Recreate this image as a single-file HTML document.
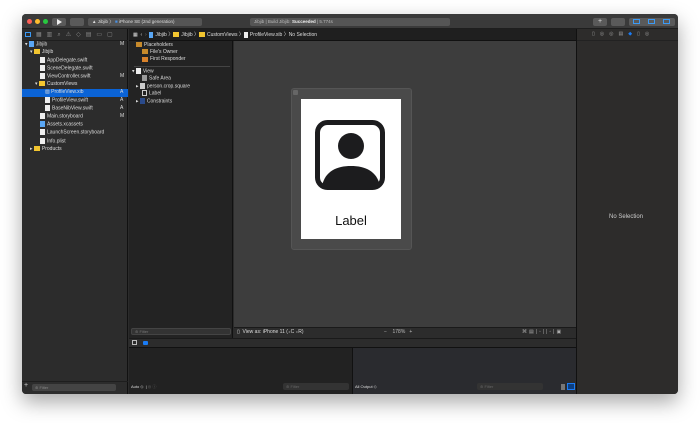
<!DOCTYPE html>
<html><head><style>
*{margin:0;padding:0;box-sizing:border-box}
body{width:700px;height:423px;background:#fff;position:relative;overflow:hidden;font-family:"Liberation Sans",sans-serif;font-size:5px;color:#ddd}
.a{position:absolute}
.win{left:22px;top:14px;width:656px;height:380px;background:#2b2b2b;border-radius:4px;box-shadow:0 8px 20px rgba(0,0,0,.35);overflow:hidden}
.t{white-space:nowrap;font-size:5px;color:#ddd}
.ic{display:inline-block;width:5px;height:6px;background:#eee;vertical-align:middle;margin-right:2px}
.fd{display:inline-block;width:6px;height:5px;background:#f2c530;vertical-align:middle;margin-right:2px}
</style></head><body>
<div class="a win">
 <div class="a" style="left:0;top:0;width:656px;height:15px;background:#3a3a3a;border-bottom:1px solid #1e1e1e"></div>
 <div class="a" style="left:5px;top:5px;width:5px;height:5px;border-radius:50%;background:#fe5f57"></div>
 <div class="a" style="left:13px;top:5px;width:5px;height:5px;border-radius:50%;background:#febc2e"></div>
 <div class="a" style="left:21px;top:5px;width:5px;height:5px;border-radius:50%;background:#28c840"></div>
 <div class="a" style="left:30px;top:4px;width:14px;height:8px;background:#5a5a5a;border-radius:2px"></div>
 <div class="a" style="left:35px;top:5px;width:0;height:0;border-left:5px solid #eee;border-top:3px solid transparent;border-bottom:3px solid transparent"></div>
 <div class="a" style="left:48px;top:4px;width:14px;height:8px;background:#5a5a5a;border-radius:2px"></div>
 <div class="a t" style="left:66px;top:4px;width:114px;height:8px;background:#555;border-radius:2px;padding:1px 4px;font-size:4.5px">▲ Jibjib 〉 <span style="color:#4a90e2">■</span> iPhone SE (2nd generation)</div>
 <div class="a t" style="left:228px;top:4px;width:200px;height:8px;background:#555;border-radius:2px;padding:1px 4px;font-size:4.5px;color:#bbb">Jibjib | Build Jibjib: <b style="color:#eee">Succeeded</b> | 5.774s</div>
 <div class="a" style="left:571px;top:4px;width:14px;height:8px;background:#5a5a5a;border-radius:2px;color:#ddd;font-size:7px;text-align:center;line-height:8px">+</div>
 <div class="a" style="left:589px;top:4px;width:14px;height:8px;background:#5a5a5a;border-radius:2px"></div>
 <div class="a" style="left:607px;top:4px;width:46px;height:8px;background:#5a5a5a;border-radius:2px"></div>
 <div class="a" style="left:611px;top:5px;width:7px;height:5px;border:1px solid #3b9af5"></div>
 <div class="a" style="left:626px;top:5px;width:7px;height:5px;border:1px solid #3b9af5"></div>
 <div class="a" style="left:641px;top:5px;width:7px;height:5px;border:1px solid #3b9af5"></div>
 <div class="a" style="left:0;top:15px;width:106px;height:365px;background:#2c2c2c;border-right:1px solid #111"></div>
 <div class="a" style="left:0;top:15px;width:106px;height:12px;border-bottom:1px solid #1e1e1e"></div>
 <div class="a" style="left:3px;top:18px;width:6px;height:5px;border:1px solid #3b9af5"></div>
 <div class="a t" style="left:14px;top:17px;color:#888;letter-spacing:5px;font-size:6px">▦▥⌕⚠◇▤▭▢</div>
 <div class="a t" style="left:3px;top:27px;line-height:7.8px">
  <div>▾ <span class="ic" style="background:#5aa7f5"></span>Jibjib<span style="position:absolute;left:95px">M</span></div>
  <div style="padding-left:5px">▾ <span class="fd"></span>Jibjib</div>
  <div style="padding-left:15px"><span class="ic"></span>AppDelegate.swift</div>
  <div style="padding-left:15px"><span class="ic"></span>SceneDelegate.swift</div>
  <div style="padding-left:15px"><span class="ic"></span>ViewController.swift<span style="position:absolute;left:95px">M</span></div>
  <div style="padding-left:10px">▾ <span class="fd"></span>CustomViews</div>
  <div style="background:#0a63d6;margin-left:-3px;padding-left:23px;width:106px">▧ ProfileView.xib<span style="position:absolute;left:95px">A</span></div>
  <div style="padding-left:20px"><span class="ic"></span>ProfileView.swift<span style="position:absolute;left:95px">A</span></div>
  <div style="padding-left:20px"><span class="ic"></span>BaseNibView.swift<span style="position:absolute;left:95px">A</span></div>
  <div style="padding-left:15px"><span class="ic"></span>Main.storyboard<span style="position:absolute;left:95px">M</span></div>
  <div style="padding-left:15px"><span class="ic" style="background:#5aa7f5"></span>Assets.xcassets</div>
  <div style="padding-left:15px"><span class="ic"></span>LaunchScreen.storyboard</div>
  <div style="padding-left:15px"><span class="ic"></span>Info.plist</div>
  <div style="padding-left:5px">▸ <span class="fd"></span>Products</div>
 </div>
 <div class="a" style="left:0;top:367px;width:106px;height:13px;border-top:1px solid #1e1e1e"></div>
 <div class="a t" style="left:2px;top:368px;font-size:7px;color:#ccc">+</div>
 <div class="a t" style="left:10px;top:370px;width:84px;height:7px;background:#444;border-radius:2px;color:#888;font-size:4px;padding:1px 3px">⊛ Filter</div>
 <div class="a" style="left:107px;top:15px;width:447px;height:12px;background:#1f1f1f;border-bottom:1px solid #111"></div>
 <div class="a t" style="left:111px;top:17px;font-size:5px">▦ &nbsp;‹ &nbsp;<span style="color:#777">›</span> &nbsp;<span class="ic" style="background:#5aa7f5;width:4px"></span>Jibjib 〉<span class="fd"></span>Jibjib 〉<span class="fd"></span>CustomViews 〉<span class="ic" style="width:4px"></span>ProfileView.xib 〉No Selection</div>
 <div class="a" style="left:107px;top:27px;width:104px;height:301px;background:#232323;border-right:1px solid #111"></div>
 <div class="a t" style="left:114px;top:28px;line-height:7.2px">
  <div><span class="fd" style="background:#c78a2b"></span>Placeholders</div>
  <div style="padding-left:6px"><span class="fd" style="background:#c78a2b"></span>File's Owner</div>
  <div style="padding-left:6px"><span class="fd" style="background:#d9822b"></span>First Responder</div>
 </div>
 <div class="a" style="left:112px;top:52px;width:96px;height:1px;background:#444"></div>
 <div class="a t" style="left:110px;top:54px;line-height:7.1px">
  <div>▾ <span class="ic"></span>View</div>
  <div style="padding-left:10px"><span class="ic" style="background:#999"></span>Safe Area</div>
  <div style="padding-left:4px">▸ <span class="ic" style="background:#ccc"></span>person.crop.square</div>
  <div style="padding-left:10px"><span class="ic" style="background:#222;border:1px solid #ccc"></span>Label</div>
  <div style="padding-left:4px">▸ <span class="ic" style="background:#2a4a8a"></span>Constraints</div>
 </div>
 <div class="a t" style="left:109px;top:314px;width:100px;height:7px;background:#333;border:1px solid #444;border-radius:2px;color:#777;font-size:4px;padding:0 3px">⊛ Filter</div>
 <div class="a" style="left:212px;top:27px;width:342px;height:301px;background:#3d3d3d"></div>
 <div class="a" style="left:269px;top:74px;width:121px;height:162px;background:#4a4a4a;border:1px solid #555;border-radius:3px"></div>
 <div class="a" style="left:271px;top:76px;width:5px;height:5px;background:#666;border-radius:1px"></div>
 <div class="a" style="left:279px;top:85px;width:100px;height:140px;background:#fff"></div>
 <svg class="a" style="left:279px;top:85px" width="100" height="140" viewBox="0 0 100 140">
  <rect x="16.5" y="23.5" width="65" height="65" rx="10" fill="none" stroke="#1c1c1e" stroke-width="5"/>
  <circle cx="50" cy="47" r="13" fill="#1c1c1e"/>
  <path d="M21 87 C24 72 36 67 50 67 C64 67 76 72 79 87 Z" fill="#1c1c1e"/>
  <text x="50" y="126" font-family="Liberation Sans,sans-serif" font-size="13" fill="#111" text-anchor="middle">Label</text>
 </svg>
 <div class="a" style="left:212px;top:313px;width:342px;height:11px;background:#2c2c2c;border-top:1px solid #1a1a1a"></div>
 <div class="a t" style="left:215px;top:315px;font-size:5px">▯ &nbsp;View as: iPhone 11 (₊C ₊R)</div>
 <div class="a t" style="left:362px;top:315px;font-size:5px;color:#bbb">− &nbsp;&nbsp;&nbsp;178% &nbsp;&nbsp;+</div>
 <div class="a t" style="left:500px;top:315px;font-size:5px;color:#aaa;letter-spacing:2px">⌘▤|◦||◦|▣</div>
 <div class="a" style="left:107px;top:324px;width:447px;height:10px;background:#2c2c2c;border-top:1px solid #1a1a1a;border-bottom:1px solid #111"></div>
 <div class="a" style="left:110px;top:326px;width:5px;height:5px;border:1px solid #bbb"></div>
 <div class="a" style="left:121px;top:327px;width:5px;height:4px;background:#1a7cf5;border-radius:1px"></div>
 <div class="a" style="left:107px;top:334px;width:223px;height:46px;background:#222"></div>
 <div class="a" style="left:330px;top:334px;width:224px;height:46px;background:#2a2b2f;border-left:1px solid #111"></div>
 <div class="a t" style="left:109px;top:370px;font-size:4px">Auto ◇ &nbsp;| <span style="color:#666">◎ ⓘ</span></div>
 <div class="a t" style="left:261px;top:369px;width:66px;height:7px;background:#333;border-radius:2px;color:#666;font-size:4px;padding:1px 3px">⊛ Filter</div>
 <div class="a t" style="left:333px;top:370px;font-size:4px">All Output ◇</div>
 <div class="a t" style="left:455px;top:369px;width:66px;height:7px;background:#333;border-radius:2px;color:#666;font-size:4px;padding:1px 3px">⊛ Filter</div>
 <div class="a" style="left:539px;top:370px;width:4px;height:6px;background:#777"></div>
 <div class="a" style="left:545px;top:369px;width:8px;height:7px;border:1px solid #1a7cf5;background:#0c3e80"></div>
 <div class="a" style="left:554px;top:15px;width:102px;height:365px;background:#2d2c2b;border-left:1px solid #111"></div>
 <div class="a" style="left:555px;top:15px;width:101px;height:12px;border-bottom:1px solid #222"></div>
 <div class="a t" style="left:570px;top:17px;font-size:5px;color:#999;letter-spacing:5px">▯◎◎▤<span style="color:#1a7cf5">◆</span>▯◎</div>
 <div class="a t" style="left:587px;top:200px;font-size:6px;color:#ccc">No Selection</div>
</div>
</body></html>
